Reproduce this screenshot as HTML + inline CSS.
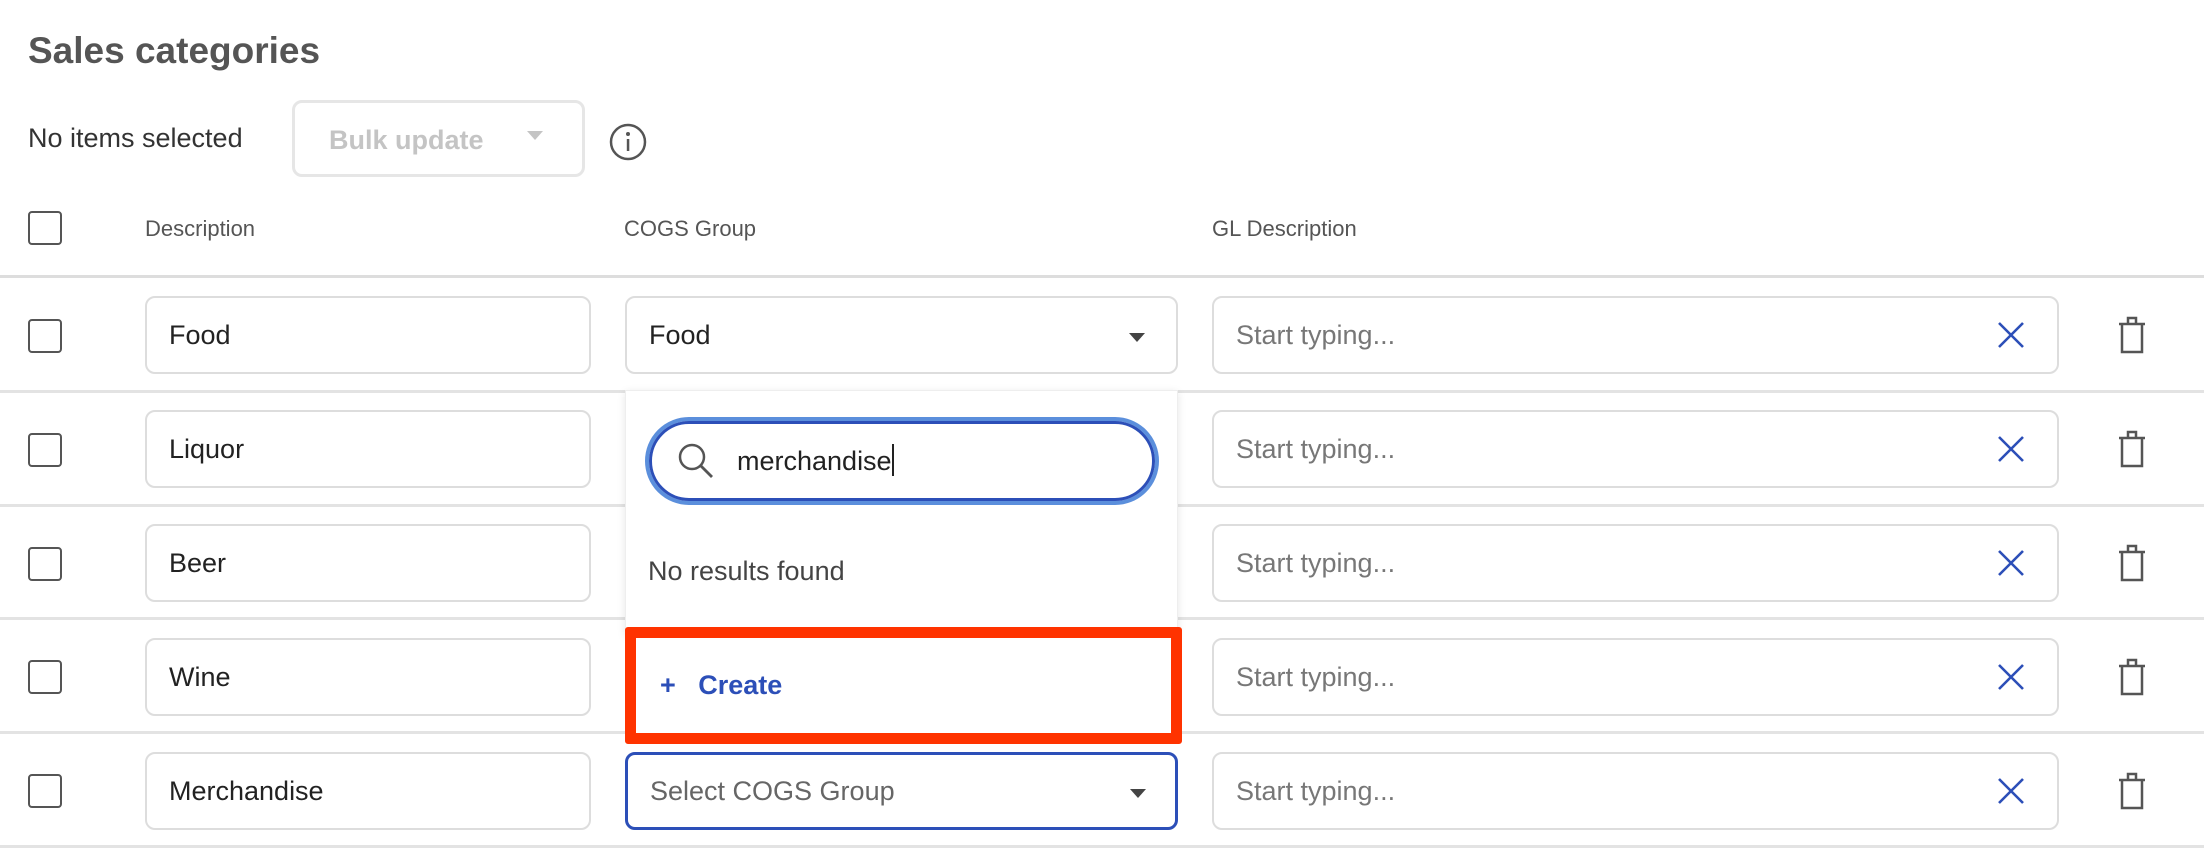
<!DOCTYPE html>
<html><head><meta charset="utf-8"><style>
*{box-sizing:border-box;margin:0;padding:0}
body{width:2204px;height:850px;background:#fff;font-family:"Liberation Sans",sans-serif;position:relative;overflow:hidden;color:#222}
.a{position:absolute}
.cb{position:absolute;left:28px;width:34px;height:34px;border:2.5px solid #555;border-radius:4px}
.inp{position:absolute;border:2px solid #ddd;border-radius:10px;background:#fff;height:78px;display:flex;align-items:center;padding-left:22px;font-size:27px}
.sep{position:absolute;left:0;width:2204px;height:3px;background:#e3e3e3}
.ph{color:#777}
.x{position:absolute;left:1997px}
.tr{position:absolute;left:2116px}
</style></head><body>
<div class="a" style="left:28px;top:30px;font-size:37px;font-weight:bold;color:#555">Sales categories</div>
<div class="a" style="left:28px;top:123px;font-size:27px;color:#333">No items selected</div>
<div class="a" style="left:292px;top:100px;width:293px;height:77px;border:3px solid #e6e6e6;border-radius:10px;font-size:27px;font-weight:bold;color:#c4c4c4;padding:22px 0 0 34px">Bulk update<span style="position:absolute;left:232px;top:28px;border-left:8px solid transparent;border-right:8px solid transparent;border-top:9px solid #c4c4c4"></span></div>
<svg class="a" style="left:608px;top:122px" width="40" height="40" viewBox="0 0 40 40"><circle cx="20" cy="20" r="17" fill="none" stroke="#555" stroke-width="2.5"/><circle cx="20" cy="12" r="2" fill="#555"/><rect x="18.8" y="17" width="2.5" height="12" fill="#555"/></svg>
<div class="cb" style="top:211px"></div>
<div class="a" style="left:145px;top:216px;font-size:22px;color:#555">Description</div>
<div class="a" style="left:624px;top:216px;font-size:22px;color:#555">COGS Group</div>
<div class="a" style="left:1212px;top:216px;font-size:22px;color:#555">GL Description</div>
<div class="sep" style="top:275px;height:3px;background:#ddd"></div>

<!-- rows -->
<div class="sep" style="top:390px"></div>
<div class="sep" style="top:504px"></div>
<div class="sep" style="top:617px"></div>
<div class="sep" style="top:731px"></div>
<div class="sep" style="top:845px"></div>

<div class="cb" style="top:319px"></div>
<div class="cb" style="top:433px"></div>
<div class="cb" style="top:547px"></div>
<div class="cb" style="top:660px"></div>
<div class="cb" style="top:774px"></div>

<div class="inp" style="left:145px;top:296px;width:446px">Food</div>
<div class="inp" style="left:145px;top:410px;width:446px">Liquor</div>
<div class="inp" style="left:145px;top:524px;width:446px">Beer</div>
<div class="inp" style="left:145px;top:638px;width:446px">Wine</div>
<div class="inp" style="left:145px;top:752px;width:446px">Merchandise</div>

<div class="inp" style="left:625px;top:296px;width:553px">Food<span style="position:absolute;left:502px;top:35px;border-left:8px solid transparent;border-right:8px solid transparent;border-top:9px solid #444"></span></div>
<div class="inp" style="left:625px;top:752px;width:553px;border:3px solid #2c4fb8;color:#666">Select COGS Group<span style="position:absolute;left:502px;top:34px;border-left:8px solid transparent;border-right:8px solid transparent;border-top:9px solid #444"></span></div>

<div class="inp ph" style="left:1212px;top:296px;width:847px">Start typing...</div>
<div class="inp ph" style="left:1212px;top:410px;width:847px">Start typing...</div>
<div class="inp ph" style="left:1212px;top:524px;width:847px">Start typing...</div>
<div class="inp ph" style="left:1212px;top:638px;width:847px">Start typing...</div>
<div class="inp ph" style="left:1212px;top:752px;width:847px">Start typing...</div>

<svg width="0" height="0" style="position:absolute"><defs>
<g id="xx"><path d="M2 2L26 26M26 2L2 26" stroke="#2c4fb8" stroke-width="2.6"/></g>
<g id="tt" fill="none" stroke="#555" stroke-width="2.5"><path d="M3 9H29M12 9V3H20V9M6 9V37H26V9"/></g>
</defs></svg>
<svg class="x" style="top:321px" width="28" height="28"><use href="#xx"/></svg>
<svg class="x" style="top:435px" width="28" height="28"><use href="#xx"/></svg>
<svg class="x" style="top:549px" width="28" height="28"><use href="#xx"/></svg>
<svg class="x" style="top:663px" width="28" height="28"><use href="#xx"/></svg>
<svg class="x" style="top:777px" width="28" height="28"><use href="#xx"/></svg>
<svg class="tr" style="top:315px" width="32" height="40"><use href="#tt"/></svg>
<svg class="tr" style="top:429px" width="32" height="40"><use href="#tt"/></svg>
<svg class="tr" style="top:543px" width="32" height="40"><use href="#tt"/></svg>
<svg class="tr" style="top:657px" width="32" height="40"><use href="#tt"/></svg>
<svg class="tr" style="top:771px" width="32" height="40"><use href="#tt"/></svg>

<!-- dropdown -->
<div class="a" style="left:625px;top:390px;width:553px;height:245px;background:#fff;border:1px solid #eee;box-shadow:0 2px 8px rgba(0,0,0,.1)"></div>
<div class="a" style="left:645px;top:417px;width:514px;height:88px;border-radius:44px;border:4px solid #5b8fdc;padding:0"><div style="position:absolute;inset:0;border:3px solid #2c4fb8;border-radius:40px"></div></div>
<svg class="a" style="left:676px;top:441px" width="40" height="40" viewBox="0 0 40 40"><circle cx="16" cy="16" r="12" fill="none" stroke="#555" stroke-width="2.5"/><path d="M25 25L36 36" stroke="#555" stroke-width="2.8"/></svg>
<div class="a" style="left:737px;top:444px;font-size:27px;color:#222">merchandise<span style="display:inline-block;width:2px;height:32px;background:#222;vertical-align:-6px"></span></div>
<div class="a" style="left:648px;top:556px;font-size:27px;color:#444">No results found</div>
<div class="a" style="left:625px;top:627px;width:557px;height:117px;border:11px solid #ff3300;border-radius:3px;background:#fff"></div>
<div class="a" style="left:660px;top:670px;font-size:27px;font-weight:bold;color:#2c4fb8">+&nbsp;&nbsp;&nbsp;Create</div>
</body></html>
